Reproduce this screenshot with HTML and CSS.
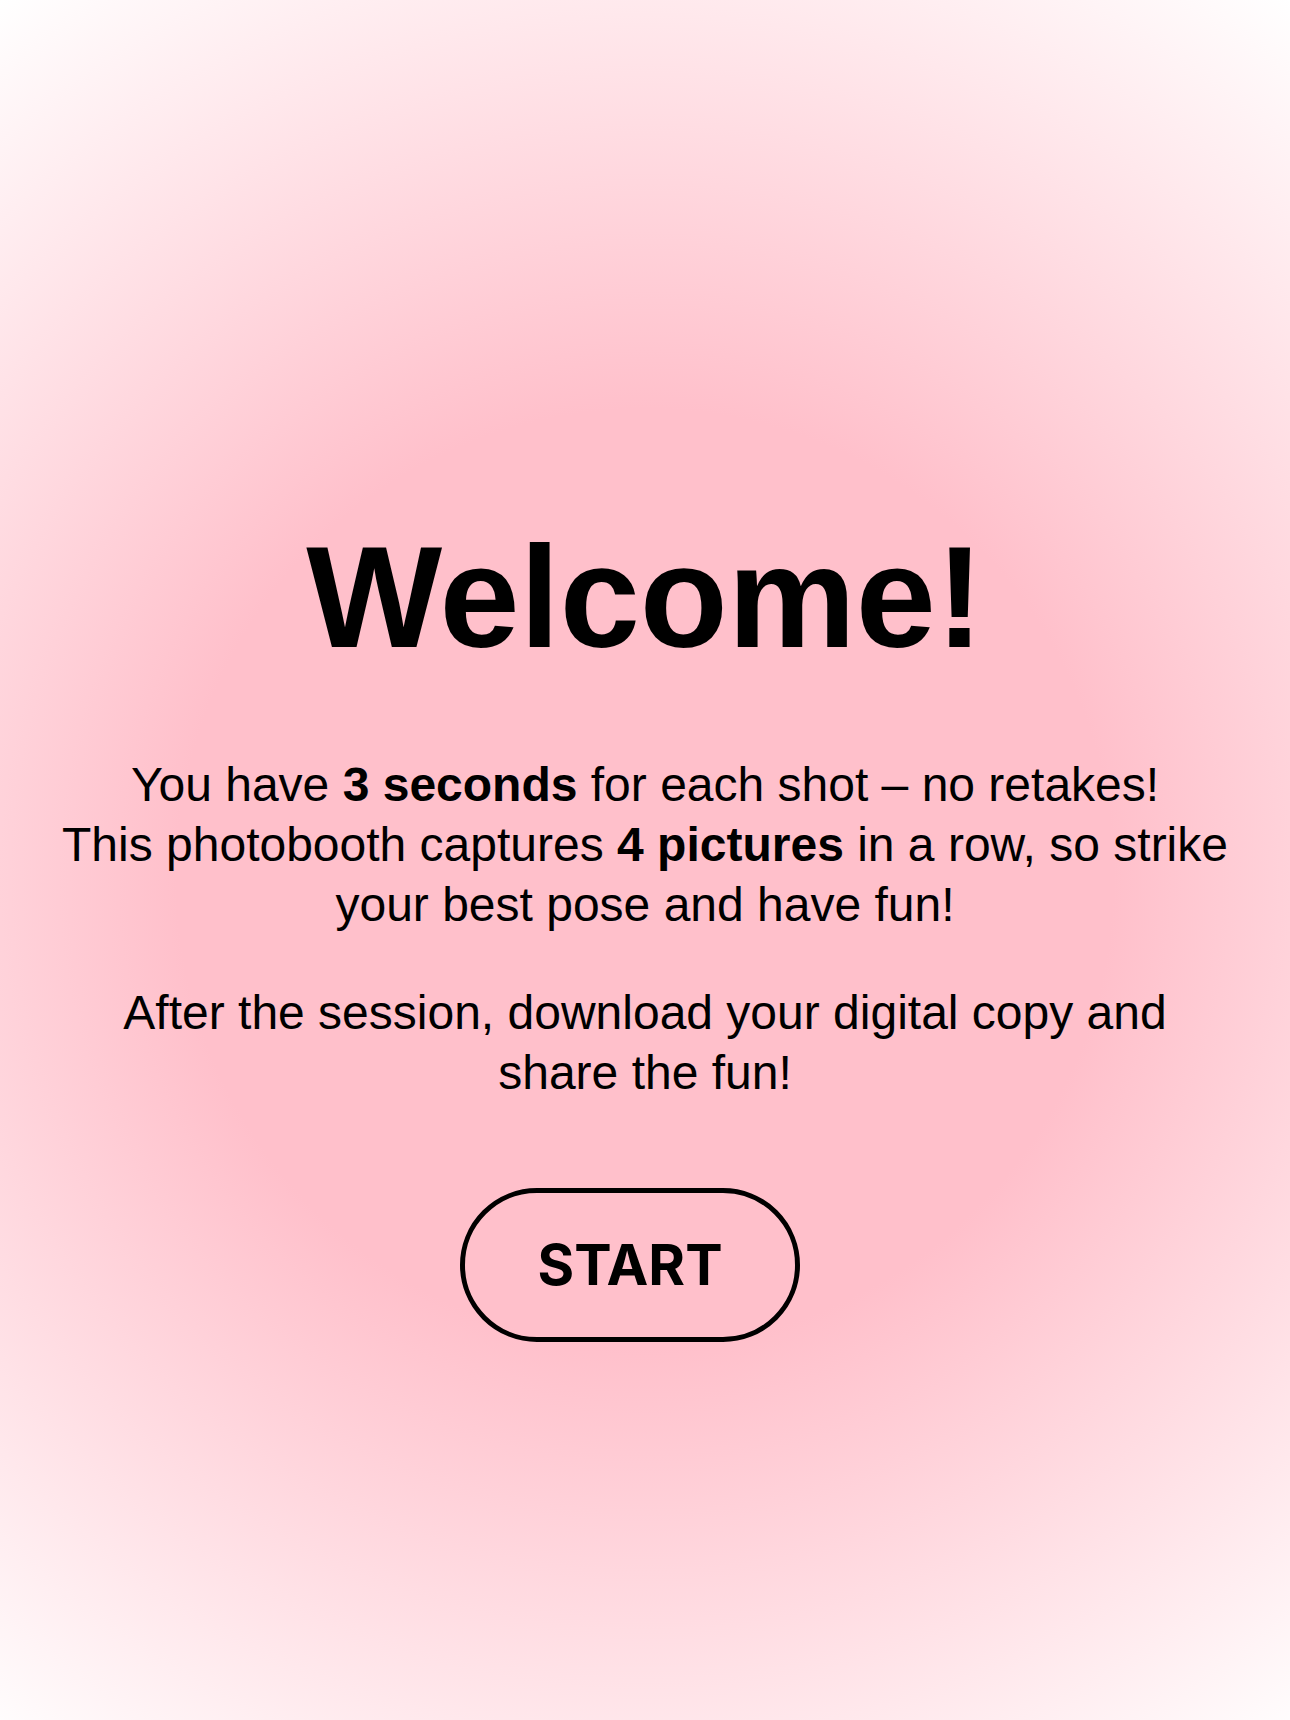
FILE: index.html
```html
<!DOCTYPE html>
<html lang="en">
<head>
    <meta charset="UTF-8">
    <meta name="viewport" content="width=device-width, initial-scale=1.0">
    <title>Photobooth</title>
    <link rel="stylesheet" href="styles.css">
</head>
<body>
    <main class="welcome">
        <h1 class="welcome-title">Welcome!</h1>
        <p class="welcome-text">You have <b>3 seconds</b> for each shot – no retakes!<br>This photobooth captures <b>4 pictures</b> in a row, so strike your best pose and have fun!</p>
        <p class="welcome-text">After the session, download your digital copy and<br>share the fun!</p>
        <button class="start-btn">START</button>
    </main>
</body>
</html>
```

FILE: styles.css
```css
html, body { margin: 0; }
body { min-height: 100vh; background: radial-gradient(circle at 50% 51%, #ffc0cb 43%, #fff 100%); font-family: "Liberation Sans", Arial, sans-serif; color: #000; }
.welcome { display: flex; flex-direction: column; align-items: center; padding: 515px 45px 0; text-align: center; }
.welcome-title { margin: 0 0 74px; font-size: 144px; line-height: 166px; font-weight: bold; }
.welcome-text { margin: 0 0 48px; max-width: 1200px; font-size: 48px; line-height: 60px; }
.welcome-text b { font-weight: bold; }
.welcome-text:last-of-type { margin-bottom: 85px; }
.start-btn { margin-right: 30px; padding: 38px 72px; font-family: Inter, "Liberation Sans", sans-serif; font-size: 56px; font-weight: 700; line-height: 68px; color: #000; background: transparent; border: 5px solid #000; border-radius: 80px; cursor: pointer; }
```
